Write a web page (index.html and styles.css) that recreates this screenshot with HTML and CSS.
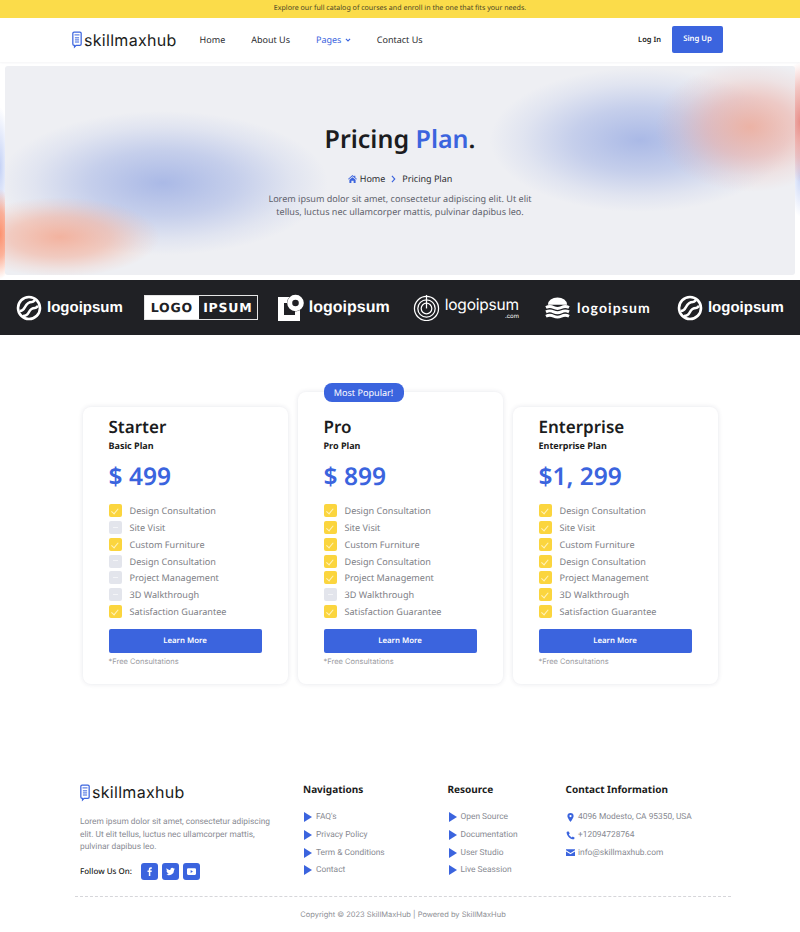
FILE: index.html
```html
<!DOCTYPE html>
<html lang="en">
<head>
    <meta charset="UTF-8">
    <meta name="viewport" content="width=device-width, initial-scale=1.0">
    <title>Pricing Plan - SkillMaxHub</title>
    <link rel="stylesheet" href="styles.css">
</head>
<body>
    <div class="topbar">Explore our full catalog of courses and enroll in the one that fits your needs.</div>

    <header class="navbar">
        <a class="brand" href="#">
            <svg class="brand-icon" viewBox="0 0 12 20"><path d="M2.500 1h7A1.500 1.500 0 0 1 11 2.500v13A1.500 1.500 0 0 1 9.500 17H5l-2 2v-2h-.5A1.500 1.500 0 0 1 1 15.500v-13A1.500 1.500 0 0 1 2.500 1z" fill="none" stroke="#3b64de" stroke-width="1.500"/><path d="M3 4.500h6M3.500 8h5M3.500 10.500h5M3.500 13h5" stroke="#3b64de" stroke-width="1.200"/></svg>
            <span>skillmaxhub</span>
        </a>
        <nav class="nav-links">
            <a href="#">Home</a>
            <a href="#">About Us</a>
            <a href="#" class="active">Pages <svg class="caret" viewBox="0 0 10 6"><path d="M1.500 1 5 4.500 8.500 1" fill="none" stroke="#3b64de" stroke-width="1.800"/></svg></a>
            <a href="#">Contact Us</a>
        </nav>
        <div class="nav-actions">
            <a href="#" class="login">Log In</a>
            <a href="#" class="signup">Sing Up</a>
        </div>
    </header>

    <section class="hero-wrap">
        <div class="hero">
            <h1>Pricing <span>Plan</span>.</h1>
            <div class="crumbs">
                <svg class="home-icon" viewBox="0 0 16 14"><path d="M8 0 0 7l1 1 7-6 7 6 1-1-3-2.600V1h-2v1.700zM2.500 8.500V14H6v-4h4v4h3.500V8.500L8 3.700z" fill="#3b64de"/></svg>
                <span>Home</span>
                <svg class="crumb-sep" viewBox="0 0 8 12"><path d="M1.500 1 6 6l-4.500 5" fill="none" stroke="#3b64de" stroke-width="1.800"/></svg>
                <span>Pricing Plan</span>
            </div>
            <p>Lorem ipsum dolor sit amet, consectetur adipiscing elit. Ut elit<br>tellus, luctus nec ullamcorper mattis, pulvinar dapibus leo.</p>
        </div>
    </section>

    <section class="logos">
        <div class="logo logo-a">
            <svg viewBox="0 0 26 26" class="logo-mark"><circle cx="13" cy="13" r="11" fill="none" stroke="#fff" stroke-width="2.600"/><path d="M4 16c3 0 4-2 5-4s3-5 7-5c1 0 2-1 3-2M7 21c3 0 5-2 6-4s3-4 6-4c1 0 2-1 3-2" fill="none" stroke="#fff" stroke-width="2.600"/></svg>
            <span>logoipsum</span>
        </div>
        <div class="logo-box"><span class="box-a">LOGO</span><span class="box-b">IPSUM</span></div>
        <div class="logo logo-a logo-third">
            <svg viewBox="0 0 27 27" class="logo-mark"><rect x="1" y="3" width="22" height="24" fill="#fff"/><rect x="7" y="9" width="11" height="12" fill="#202125"/><circle cx="18.500" cy="9" r="8.500" fill="#202125"/><circle cx="18.500" cy="9" r="5.800" fill="none" stroke="#fff" stroke-width="5"/></svg>
            <span>logoipsum</span>
        </div>
        <div class="logo logo-c">
            <svg viewBox="0 0 28 28" class="logo-mark"><g fill="none" stroke="#fff" stroke-width="1.300"><circle cx="14" cy="15" r="12.500"/><circle cx="14" cy="15" r="9"/><circle cx="14" cy="15" r="5.500"/><path d="M14 1v14"/></g></svg>
            <span class="logo-text">logoipsum<small>.com</small></span>
        </div>
        <div class="logo logo-d">
            <svg viewBox="0 0 26 22" class="logo-wave"><path d="M3 7.500a10 7.500 0 0 1 20 0z" fill="#fff"/><path d="M1 10.500c3-1.500 5-1.500 8 0s5 1.500 8 0 5-1.500 8 0M1 15c3-1.500 5-1.500 8 0s5 1.500 8 0 5-1.500 8 0M1 19.500c3-1.500 5-1.500 8 0s5 1.500 8 0 5-1.500 8 0" fill="none" stroke="#fff" stroke-width="3"/></svg>
            <span>logoipsum</span>
        </div>
        <div class="logo logo-a logo-last">
            <svg viewBox="0 0 26 26" class="logo-mark"><circle cx="13" cy="13" r="11" fill="none" stroke="#fff" stroke-width="2.600"/><path d="M4 16c3 0 4-2 5-4s3-5 7-5c1 0 2-1 3-2M7 21c3 0 5-2 6-4s3-4 6-4c1 0 2-1 3-2" fill="none" stroke="#fff" stroke-width="2.600"/></svg>
            <span>logoipsum</span>
        </div>
    </section>

    <section class="pricing">
        <div class="card">
            <h2>Starter</h2>
            <h3>Basic Plan</h3>
            <div class="price">$ 499</div>
            <ul class="features">
                <li><i class="check on"></i>Design Consultation</li>
                <li><i class="check"></i>Site Visit</li>
                <li><i class="check on"></i>Custom Furniture</li>
                <li><i class="check"></i>Design Consultation</li>
                <li><i class="check"></i>Project Management</li>
                <li><i class="check"></i>3D Walkthrough</li>
                <li><i class="check on"></i>Satisfaction Guarantee</li>
            </ul>
            <a href="#" class="learn">Learn More</a>
            <div class="note">*Free Consultations</div>
        </div>
        <div class="card featured">
            <span class="badge">Most Popular!</span>
            <h2>Pro</h2>
            <h3>Pro Plan</h3>
            <div class="price">$ 899</div>
            <ul class="features">
                <li><i class="check on"></i>Design Consultation</li>
                <li><i class="check on"></i>Site Visit</li>
                <li><i class="check on"></i>Custom Furniture</li>
                <li><i class="check on"></i>Design Consultation</li>
                <li><i class="check on"></i>Project Management</li>
                <li><i class="check"></i>3D Walkthrough</li>
                <li><i class="check on"></i>Satisfaction Guarantee</li>
            </ul>
            <a href="#" class="learn">Learn More</a>
            <div class="note">*Free Consultations</div>
        </div>
        <div class="card">
            <h2>Enterprise</h2>
            <h3>Enterprise Plan</h3>
            <div class="price">$1, 299</div>
            <ul class="features">
                <li><i class="check on"></i>Design Consultation</li>
                <li><i class="check on"></i>Site Visit</li>
                <li><i class="check on"></i>Custom Furniture</li>
                <li><i class="check on"></i>Design Consultation</li>
                <li><i class="check on"></i>Project Management</li>
                <li><i class="check on"></i>3D Walkthrough</li>
                <li><i class="check on"></i>Satisfaction Guarantee</li>
            </ul>
            <a href="#" class="learn">Learn More</a>
            <div class="note">*Free Consultations</div>
        </div>
    </section>

    <footer class="footer">
        <div class="footer-cols">
            <div class="col-about">
                <a class="brand brand-small" href="#">
                    <svg class="brand-icon" viewBox="0 0 12 20"><path d="M2.500 1h7A1.500 1.500 0 0 1 11 2.500v13A1.500 1.500 0 0 1 9.500 17H5l-2 2v-2h-.5A1.500 1.500 0 0 1 1 15.500v-13A1.500 1.500 0 0 1 2.500 1z" fill="none" stroke="#3b64de" stroke-width="1.500"/><path d="M3 4.500h6M3.500 8h5M3.500 10.500h5M3.500 13h5" stroke="#3b64de" stroke-width="1.200"/></svg>
                    <span>skillmaxhub</span>
                </a>
                <p>Lorem ipsum dolor sit amet, consectetur adipiscing elit. Ut elit tellus, luctus nec ullamcorper mattis, pulvinar dapibus leo.</p>
                <div class="follow">
                    <span>Follow Us On:</span>
                    <a href="#" class="social"><svg viewBox="0 0 10 16"><path d="M6.500 16V9h2.300l.4-2.800H6.500V4.500c0-.8.300-1.300 1.400-1.300h1.400V.7C9 .6 8.200.5 7.300.5 5.200.5 3.800 1.800 3.800 4.100v2.100H1.500V9h2.300v7z" fill="#fff"/></svg></a>
                    <a href="#" class="social"><svg viewBox="0 0 16 13"><path d="M16 1.500c-.6.300-1.200.4-1.900.5.700-.4 1.200-1 1.400-1.800-.6.400-1.300.7-2.100.8A3.300 3.300 0 0 0 7.800 4C5.100 3.900 2.700 2.600 1.100.600.300 2.100.700 4 2.100 5 1.600 5 1.100 4.800.7 4.600c0 1.600 1.100 3 2.600 3.300-.5.100-1 .2-1.500.1.400 1.300 1.600 2.200 3.100 2.300A6.600 6.600 0 0 1 0 11.600 9.300 9.300 0 0 0 14.400 3.300c.6-.4 1.200-1 1.600-1.800z" fill="#fff"/></svg></a>
                    <a href="#" class="social"><svg viewBox="0 0 16 12"><path d="M14 0H2a2 2 0 0 0-2 2v8a2 2 0 0 0 2 2h12a2 2 0 0 0 2-2V2a2 2 0 0 0-2-2zM6.500 8.500v-5l4 2.500z" fill="#fff" fill-rule="evenodd"/></svg></a>
                </div>
            </div>
            <div class="col-nav">
                <h4>Navigations</h4>
                <ul class="links">
                    <li>FAQ's</li>
                    <li>Privacy Policy</li>
                    <li>Term &amp; Conditions</li>
                    <li>Contact</li>
                </ul>
            </div>
            <div class="col-res">
                <h4>Resource</h4>
                <ul class="links">
                    <li>Open Source</li>
                    <li>Documentation</li>
                    <li>User Studio</li>
                    <li>Live Seassion</li>
                </ul>
            </div>
            <div class="col-contact">
                <h4>Contact Information</h4>
                <ul class="contact">
                    <li><svg viewBox="0 0 12 16"><path d="M6 0a5.500 5.500 0 0 0-5.500 5.500C.5 9.500 6 16 6 16s5.500-6.500 5.500-10.500A5.500 5.500 0 0 0 6 0zm0 7.500a2 2 0 1 1 0-4 2 2 0 0 1 0 4z" fill="#3b64de" fill-rule="evenodd"/></svg>4096 Modesto, CA 95350, USA</li>
                    <li><svg viewBox="0 0 14 14"><path d="M3.500.5 1 1.500C.5 7 6.500 13.500 12.500 13l1-2.500-3-2-1.500 1.500C7 9 5 7 4.500 5L6 3.500z" fill="#3b64de"/></svg>+12094728764</li>
                    <li><svg viewBox="0 0 16 12"><path d="M0 0h16v2L8 7 0 2zM0 4l8 5 8-5v8H0z" fill="#3b64de"/></svg>info@skillmaxhub.com</li>
                </ul>
            </div>
        </div>
        <div class="copyright">Copyright &copy; 2023 SkillMaxHub | Powered by SkillMaxHub</div>
    </footer>
</body>
</html>
```

FILE: styles.css
```css
* { box-sizing: border-box; }
body { margin: 0; font-family: "Noto Sans", "Open Sans", sans-serif; background: #fff; color: #1b1c20; text-rendering: geometricPrecision; }
a { color: inherit; text-decoration: none; }
ul { list-style: none; margin: 0; padding: 0; }

.topbar { height: 18px; background: #fbdc4a; text-align: center; font-size: 7.100px; line-height: 17px; color: #4a4526; }

.navbar { height: 44px; display: flex; align-items: center; padding: 0 77px 1px 72px; box-shadow: 0 1px 2px rgba(30,40,80,.05); position: relative; }
.brand { display: flex; align-items: center; gap: 2px; font-family: Inter, sans-serif; font-size: 16px; color: #1b1c20; letter-spacing: 0.3px; }
.brand-icon { width: 10px; height: 19px; }
.nav-links { display: flex; gap: 26px; margin-left: 23px; font-size: 9px; color: #2b2c30; }
.nav-links .active { color: #3b64de; }
.caret { width: 6px; height: 4px; margin-left: 1px; vertical-align: 1px; }
.nav-actions { margin-left: auto; display: flex; align-items: center; gap: 11px; }
.login { font-size: 7.500px; font-weight: 600; }
.signup { width: 51px; height: 27px; background: #3b64de; color: #fff; font-size: 7.700px; font-weight: 600; text-align: center; line-height: 27px; border-radius: 2px; }

.hero-wrap { height: 218px; padding: 4px 5px 0; background:
    radial-gradient(ellipse 20px 60px at 100% 60px, #e88f8a 0%, rgba(232,143,138,.5) 60%, rgba(232,143,138,0) 100%),
    radial-gradient(ellipse 14px 45px at 0 172px, #fb9270 0%, rgba(251,146,112,.7) 50%, rgba(251,146,112,0) 100%),
    radial-gradient(ellipse 10px 60px at 0 105px, rgba(190,205,245,.9) 0%, rgba(190,205,245,0) 100%),
    radial-gradient(ellipse 10px 40px at 100% 115px, rgba(190,205,245,.8) 0%, rgba(190,205,245,0) 100%),
    #fff; }
.hero { height: 209px; border-radius: 3px; text-align: center; padding-top: 56px; background:
    radial-gradient(ellipse 95px 65px at 745px 61px, rgba(238,170,152,.85) 0%, rgba(236,170,160,.55) 45%, rgba(236,170,160,.18) 75%, rgba(236,170,160,0) 100%),
    radial-gradient(ellipse 100px 40px at 55px 171px, rgba(243,172,150,.9) 0%, rgba(243,172,150,.55) 50%, rgba(243,172,150,.18) 80%, rgba(243,172,150,0) 100%),
    radial-gradient(ellipse 150px 72px at 635px 74px, rgba(170,185,230,1) 0%, rgba(170,185,230,.6) 45%, rgba(170,185,230,.2) 78%, rgba(170,185,230,0) 100%),
    radial-gradient(ellipse 165px 72px at 158px 117px, rgba(170,185,230,1) 0%, rgba(170,185,230,.6) 45%, rgba(170,185,230,.2) 78%, rgba(170,185,230,0) 100%),
    #eeeff3; }
.hero h1 { margin: 0; font-size: 25px; line-height: 34px; font-weight: 600; }
.hero h1 span { color: #3b64de; }
.crumbs { display: flex; justify-content: center; align-items: center; gap: 3px; margin-top: 16px; font-size: 9px; line-height: 14px; color: #2b2c30; }
.home-icon { width: 9px; height: 8px; }
.crumb-sep { width: 5px; height: 8px; margin: 0 3px; }
.hero p { margin: 5.500px 0 0; font-size: 9.050px; line-height: 13px; color: #60626c; }

.logos { height: 55px; background: #202125; display: flex; align-items: center; padding: 0 0 0 16px; color: #fff; }
.logo { display: flex; align-items: center; font-family: "Liberation Sans", sans-serif; font-weight: 700; font-size: 15px; gap: 5px; }
.logo-mark { width: 26px; height: 26px; flex: none; }
.logo-third { margin-left: 19px; font-size: 16px; }
.logo-third .logo-mark { width: 27px; height: 27px; }
.logo-c { margin-left: 23px; font-family: Inter, sans-serif; font-weight: 400; font-size: 15.500px; letter-spacing: -0.2px; gap: 5px; }
.logo-c .logo-mark { width: 27px; height: 27px; }
.logo-text { display: flex; flex-direction: column; line-height: 17px; }
.logo-text small { font-size: 6px; line-height: 7px; text-align: right; letter-spacing: 0; }
.logo-d { margin-left: 26px; font-family: Lato, sans-serif; font-size: 14px; letter-spacing: 1.100px; gap: 7px; }
.logo-wave { width: 25px; height: 22px; }
.logo-last { margin-left: 26px; }
.logo-box { width: 114px; height: 25px; margin-left: 21px; display: flex; border: 1px solid #e6e6e6; font-family: "DejaVu Sans", sans-serif; font-weight: 700; font-size: 12.500px; letter-spacing: .8px; line-height: 23px; text-align: center; }
.box-a { width: 54px; background: #fff; color: #202125; }
.box-b { flex: 1; color: #fff; }

.pricing { display: flex; justify-content: center; align-items: flex-end; gap: 10px; padding: 56px 0 0; height: 349px; }
.card { position: relative; width: 205px; height: 277px; border-radius: 8px; background: #fff; box-shadow: 0 0 5px rgba(30,40,80,.12); padding: 11px 26px 0; }
.card.featured { height: 292px; padding-top: 26px; }
.badge { position: absolute; top: -9px; left: 26px; width: 80px; height: 19px; border-radius: 8px; background: #3b64de; color: #fff; font-size: 9.100px; line-height: 19px; text-align: center; }
.card h2 { margin: 0; font-size: 17px; line-height: 18px; font-weight: 600; }
.card h3 { margin: 3px 0 0; font-size: 9px; line-height: 14px; font-weight: 700; }
.price { margin-top: 8px; font-size: 24.500px; line-height: 32px; font-weight: 600; color: #3b64de; }
.features { margin-top: 9.500px; }
.features li { display: flex; align-items: center; gap: 8px; height: 16.750px; font-size: 9.100px; color: #7d7e85; }
.check { position: relative; flex: none; width: 13px; height: 13px; border-radius: 2px; background: #e3e5ec; }
.check::after { content: ""; position: absolute; left: 4px; top: 5.500px; width: 5px; height: 1px; background: #f3f4f7; }
.check.on { background: #fbd53e; }
.check.on::after { left: 4.500px; top: 3px; width: 3px; height: 5.500px; background: none; border: solid #fff3bd; border-width: 0 1.200px 1.200px 0; transform: rotate(40deg); }
.learn { display: block; margin-top: 9px; height: 24px; border-radius: 2px; background: #3b64de; color: #fff; font-size: 7.800px; font-weight: 600; line-height: 24px; text-align: center; }
.note { margin-top: 4px; font-family: Inter, sans-serif; font-size: 7.500px; line-height: 10px; color: #9a9ba1; }

.footer { padding: 93px 69px 0 75px; }
.footer-cols { display: flex; padding: 0 0 15.500px 5px; border-bottom: 1px dashed #d6d6da; }
.col-about { width: 223px; padding-top: 5px; }
.brand-small { font-size: 16px; gap: 2px; }
.col-about p { width: 195px; margin: 14px 0 0; font-family: Roboto, sans-serif; font-size: 8.350px; line-height: 12.500px; color: #888a92; }
.follow { display: flex; align-items: center; gap: 4px; margin-top: 9px; font-size: 8px; font-weight: 500; }
.follow span { margin-right: 5px; }
.social { width: 17px; height: 17.500px; border-radius: 3px; background: #3b64de; display: flex; align-items: center; justify-content: center; }
.social svg { width: 9px; height: 9px; }
.col-nav { width: 144.500px; }
.col-res { width: 118px; }
.footer h4 { margin: 5px 0 0; font-size: 10px; line-height: 14px; font-weight: 700; }
.links, .contact { margin-top: 12.500px; font-family: Roboto, sans-serif; font-size: 8.400px; color: #888a92; }
.links li, .contact li { display: flex; align-items: center; height: 17.700px; }
.links li::before { content: ""; width: 0; height: 0; margin: 0 4px 0 1px; border-left: 8px solid #3b64de; border-top: 5px solid transparent; border-bottom: 5px solid transparent; }
.contact svg { width: 9px; height: 9px; margin-right: 3.500px; }
.copyright { padding-top: 12px; text-align: center; font-family: Inter, sans-serif; font-size: 7.500px; line-height: 12px; color: #8e8f95; }
```
